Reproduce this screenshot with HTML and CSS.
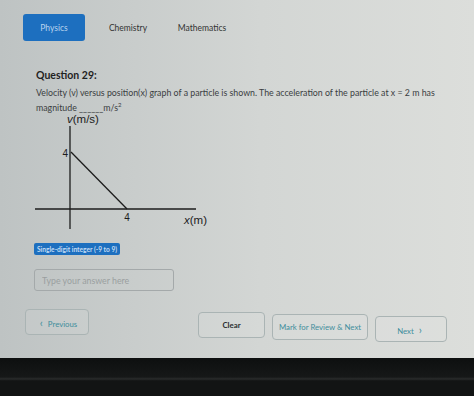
FILE: index.html
```html
<!DOCTYPE html>
<html lang="en">
<head>
    <meta charset="UTF-8">
    <meta name="viewport" content="width=device-width, initial-scale=1.0">
    <title>Question 29</title>
    <link rel="stylesheet" href="styles.css">
</head>
<body>
    <div class="screen">
        <nav class="tabs">
            <button class="tab active">Physics</button>
            <button class="tab">Chemistry</button>
            <button class="tab">Mathematics</button>
        </nav>

        <main class="question">
            <h2>Question 29:</h2>
            <p class="prompt">Velocity (v) versus position(x) graph of a particle is shown. The acceleration of the particle at x = 2 m has<br>magnitude ______m/s<sup>2</sup></p>

            <!-- v-x graph -->
            <svg class="graph" width="190" height="118" viewBox="0 0 190 118">
                <text x="37" y="10" class="axis-label"><tspan font-style="italic">v</tspan>(m/s)</text>
                <line x1="40" y1="13" x2="40" y2="116" />
                <line x1="5" y1="96" x2="166" y2="96" />
                <line x1="41" y1="39" x2="97" y2="96" />
                <text x="38" y="44" text-anchor="end" class="tick">4</text>
                <text x="97" y="108" text-anchor="middle" class="tick">4</text>
                <text x="154" y="111" class="axis-label"><tspan font-style="italic">x</tspan>(m)</text>
            </svg>

            <span class="badge">Single-digit integer (-9 to 9)</span>
            <input class="answer" type="text" placeholder="Type your answer here">
        </main>

        <footer class="actions">
            <button class="btn"><span class="chev">&lsaquo;</span> Previous</button>
            <div class="right">
                <button class="btn clear">Clear</button>
                <button class="btn mark">Mark for Review &amp; Next</button>
                <button class="btn next">Next <span class="chev">&rsaquo;</span></button>
            </div>
        </footer>
    </div>
    <div class="bezel"></div>
</body>
</html>
```

FILE: styles.css
```css
html, body {
    margin: 0;
    padding: 0;
}

body {
    font-family: Lato, "Open Sans", sans-serif;
    width: 474px;
    height: 396px;
    overflow: hidden;
    background: #121414;
}

.screen {
    height: 358px;
    background: linear-gradient(to right, #bec3c3, #d3d6d4 55%, #dcdedb);
    display: flex;
    flex-direction: column;
}

.tabs {
    display: flex;
    gap: 12px;
    padding: 14px 0 0 23px;
}

.tab {
    width: 62px;
    height: 27px;
    border: none;
    border-radius: 3px;
    background: transparent;
    font-family: inherit;
    font-size: 8.5px;
    color: #333;
    padding: 0;
}

.tab.active {
    background: #1d6fbf;
    color: #b9d3ee;
}

.question {
    padding: 28px 0 0 34px;
    display: flex;
    flex-direction: column;
    align-items: flex-start;
}

.question h2 {
    margin: 0 0 0 2px;
    font-size: 10.5px;
    font-weight: 700;
    color: #1f2222;
}

.prompt {
    margin: 4px 0 0 2px;
    white-space: nowrap;
    font-size: 8.8px;
    line-height: 15px;
    color: #3a3d3f;
}

.prompt sup {
    font-size: 6px;
    line-height: 0;
}

.graph {
    display: block;
    margin: -2px 0 0 -4px;
}

.graph line {
    stroke: #1c1c1c;
    stroke-width: 1.3;
}

.graph text {
    fill: #1c1c1c;
    font-family: "Liberation Sans", Arial, sans-serif;
}

.axis-label {
    font-size: 11.5px;
}

.tick {
    font-size: 10px;
}

.badge {
    margin-top: 12px;
    background: #1d6fbf;
    color: #c4dcf4;
    font-size: 6.6px;
    font-weight: 700;
    padding: 2px 3px;
    border-radius: 2px;
}

.answer {
    margin-top: 14px;
    width: 140px;
    height: 22px;
    box-sizing: border-box;
    border: 1px solid #a4a9aa;
    border-radius: 3px;
    background: transparent;
    padding: 0 7px;
    font-family: inherit;
    font-size: 8.8px;
}

.answer::placeholder {
    color: #9a9fa0;
    font-style: normal;
}

.actions {
    margin-top: auto;
    display: flex;
    align-items: flex-start;
    padding: 0 27px 16px 25px;
}

.right {
    margin-left: auto;
    display: flex;
    gap: 7px;
    padding-top: 3px;
}

.btn {
    height: 26px;
    border: 1px solid #aab4b4;
    border-radius: 4px;
    background: rgba(255, 255, 255, 0.08);
    font-family: inherit;
    font-size: 7.8px;
    color: #3f8e9c;
    padding: 0;
    width: 64px;
}

.chev {
    font-size: 11px;
    margin: 0 3px;
}

.btn.clear {
    width: 67px;
    color: #2b2e2f;
    font-weight: 700;
}

.btn.mark {
    width: 96px;
    margin-top: 2px;
}

.btn.next {
    width: 72px;
    margin-top: 4px;
}

.bezel {
    height: 38px;
    background: linear-gradient(to bottom, #0d0f0f, #161818 50%, #2a2c2c 55%, #121414 60%);
}
```
